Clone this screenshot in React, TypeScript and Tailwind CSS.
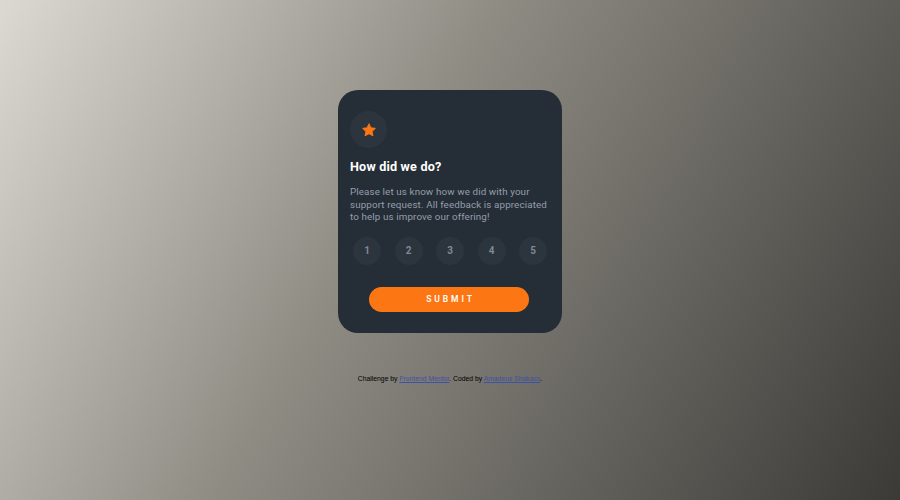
const ratings = [1, 2, 3, 4, 5];

export default function App() {
  return (
    <main className="flex h-[500px] w-full flex-col items-center overflow-hidden bg-[linear-gradient(120deg,#dcd9d3_0%,#8f8c84_42%,#3b3a37_100%)] pt-[90px] font-['Roboto',sans-serif]">
      <section className="h-[243px] w-[224px] rounded-[20px] bg-[#252d37] px-3 pt-[21px]">
        <div className="flex h-[37px] w-[37px] items-center justify-center rounded-full bg-[#2c343e]">
          <svg viewBox="0 0 24 24" className="h-[14px] w-[14px] fill-[#fc7614]" aria-hidden="true">
            <path d="M12 1.2l3.3 7 7.7 1-5.6 5.3 1.4 7.6L12 18.4l-6.8 3.7 1.4-7.6L1 9.2l7.7-1z" stroke="#fc7614" strokeWidth="1.5" strokeLinejoin="round" />
          </svg>
        </div>
        <h1 className="mt-[9px] text-[12.6px] leading-[20px] font-bold tracking-[0.2px] text-white">How did we do?</h1>
        <p className="mt-[9px] w-[204px] text-[9.8px] leading-[12.5px] tracking-[0.12px] text-[#959eac]">
          Please let us know how we did with your support request. All feedback is appreciated to help us improve our offering!
        </p>
        <div className="mt-[13px] flex justify-between px-[3px]">
          {ratings.map((n) => (
            <button
              key={n}
              type="button"
              className="flex h-[28px] w-[28px] items-center justify-center rounded-full bg-[#2c343e] text-[10px] font-bold text-[#7f8896]"
            >
              {n}
            </button>
          ))}
        </div>
        <button
          type="button"
          className="mx-auto mt-[22.5px] block h-[25px] w-[160px] -translate-x-px rounded-full bg-[#fc7614] pl-[3px] text-[8.5px] font-semibold tracking-[2.9px] text-white"
        >
          SUBMIT
        </button>
      </section>
      <footer className="mt-[41px] font-['Liberation_Sans',sans-serif] text-[6.8px] leading-[9px] text-black">
        Challenge by <a href="#" className="text-[#3e52a3] underline">Frontend Mentor</a>. Coded by{" "}
        <a href="#" className="text-[#3e52a3] underline">Amadeus Shakacs</a>.
      </footer>
    </main>
  );
}
